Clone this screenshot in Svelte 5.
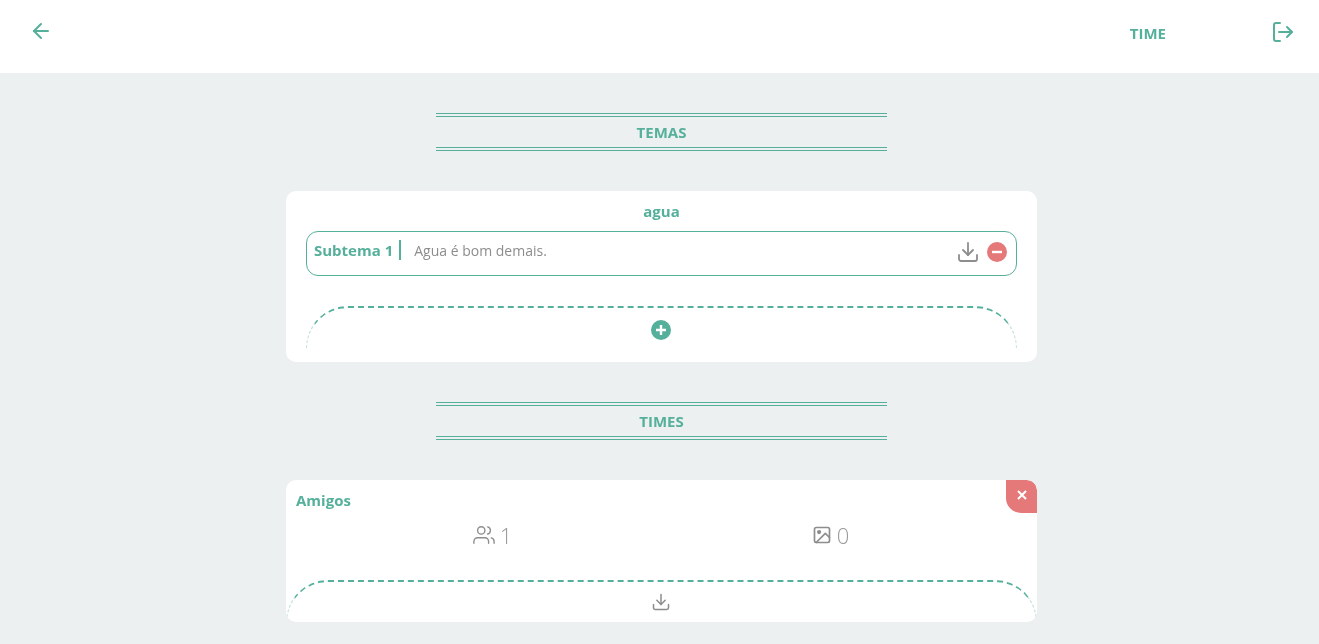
<script>
  const temas = [{ name: 'agua', subtemas: [{ title: 'Subtema 1', text: 'Agua é bom demais.' }] }];
  const times = [{ name: 'Amigos', members: 1, images: 0 }];
</script>

{#snippet download(size)}
  <svg width={size} height={size} viewBox="0 0 24 24" fill="none" stroke="#8d8d8d" stroke-width="1.8" stroke-linecap="round" stroke-linejoin="round">
    <path d="M21 15v4a2 2 0 0 1-2 2H5a2 2 0 0 1-2-2v-4" />
    <path d="M7 10l5 5 5-5" />
    <path d="M12 15V3" />
  </svg>
{/snippet}

<header class="topbar">
  <button class="icon-btn back" aria-label="Voltar">
    <svg width="24" height="24" viewBox="0 0 24 24" fill="none" stroke="#55b09b" stroke-width="2" stroke-linecap="round" stroke-linejoin="round">
      <path d="M19 12H5" />
      <path d="M12 19l-7-7 7-7" />
    </svg>
  </button>
  <span class="time-link">TIME</span>
  <button class="icon-btn logout" aria-label="Sair">
    <svg width="24" height="24" viewBox="0 0 24 24" fill="none" stroke="#55b09b" stroke-width="2" stroke-linecap="round" stroke-linejoin="round">
      <path d="M9 3H5a2 2 0 0 0-2 2v14a2 2 0 0 0 2 2h4" />
      <path d="M16 17l5-5-5-5" />
      <path d="M21 12H8" />
    </svg>
  </button>
</header>

<main class="content">
  <h2 class="section-title">TEMAS</h2>

  {#each temas as tema}
    <section class="card tema">
      <h3 class="tema-name">{tema.name}</h3>
      {#each tema.subtemas as sub}
        <div class="subtema">
          <strong class="sub-title">{sub.title}</strong>
          <span class="sub-text">{sub.text}</span>
          {@render download(24)}
          <span class="round red" aria-hidden="true">
            <svg width="20" height="20" viewBox="0 0 20 20"><path d="M5 10h10" stroke="#fff" stroke-width="2.4" /></svg>
          </span>
        </div>
      {/each}
      <div class="dashed add">
        <span class="round green" aria-hidden="true">
          <svg width="20" height="20" viewBox="0 0 20 20"><path d="M5 10h10M10 5v10" stroke="#fff" stroke-width="2.4" /></svg>
        </span>
      </div>
    </section>
  {/each}

  <h2 class="section-title second">TIMES</h2>

  {#each times as time}
    <section class="card team">
      <button class="close" aria-label="Excluir">
        <svg width="12" height="12" viewBox="0 0 12 12"><path d="M2 2l8 8M10 2l-8 8" stroke="#fff" stroke-width="2" /></svg>
      </button>
      <h3 class="team-name">{time.name}</h3>
      <div class="stats">
        <div class="stat">
          <svg width="22" height="22" viewBox="0 0 24 24" fill="none" stroke="#8d8d8d" stroke-width="1.5" stroke-linecap="round" stroke-linejoin="round">
            <path d="M17 21v-2a4 4 0 0 0-4-4H5a4 4 0 0 0-4 4v2" />
            <circle cx="9" cy="7" r="4" />
            <path d="M23 21v-2a4 4 0 0 0-3-3.87" />
            <path d="M16 3.13a4 4 0 0 1 0 7.75" />
          </svg>
          <span>{time.members}</span>
        </div>
        <div class="stat">
          <svg width="20" height="20" viewBox="0 0 24 24" fill="none" stroke="#8d8d8d" stroke-width="2" stroke-linecap="round" stroke-linejoin="round">
            <rect x="3" y="3" width="18" height="18" rx="2" />
            <circle cx="8.5" cy="8.5" r="1.5" fill="#8d8d8d" />
            <path d="M21 15l-5-5L5 21" />
          </svg>
          <span>{time.images}</span>
        </div>
      </div>
      <div class="dashed import">
        {@render download(20)}
      </div>
    </section>
  {/each}
</main>

<style>
  :global(body) {
    margin: 0;
    background: #ecf0f1;
    font-family: "Open Sans", "Noto Sans", sans-serif;
    overflow: hidden;
  }

  /* own layer, so text gets grayscale antialiasing */
  :global(#app) {
    will-change: transform;
  }

  .topbar {
    height: 73px;
    background: #fff;
    display: flex;
    align-items: flex-start;
    box-sizing: border-box;
    padding: 0 24px 0 29px;
  }

  .icon-btn {
    background: none;
    border: 0;
    padding: 0;
    display: flex;
  }

  .back {
    margin-top: 19px;
  }

  .time-link {
    margin-left: auto;
    margin-top: 23px;
    font-size: 15px;
    line-height: 20px;
    font-weight: 700;
    color: #55b09b;
  }

  .logout {
    margin-left: 105px;
    margin-top: 20px;
  }

  .content {
    display: flex;
    flex-direction: column;
    align-items: center;
    padding-top: 40px;
    padding-left: 4px;
  }

  .section-title {
    width: 451px;
    height: 38px;
    box-sizing: border-box;
    margin: 0 0 40px;
    border-top: 4px double #55b09b;
    border-bottom: 4px double #55b09b;
    text-align: center;
    font-size: 15px;
    line-height: 30px;
    font-weight: 700;
    color: #55b09b;
  }

  .section-title.second {
    margin-top: 40px;
  }

  .card {
    width: 751px;
    background: #fff;
    border-radius: 10px;
    box-sizing: border-box;
    position: relative;
  }

  .tema {
    height: 171px;
    padding: 10px 20px 0;
  }

  .tema-name {
    margin: 0 0 10px;
    text-align: center;
    font-size: 15px;
    line-height: 20px;
    font-weight: 700;
    color: #55b09b;
  }

  .subtema {
    height: 45px;
    box-sizing: border-box;
    border: 1px solid #55b09b;
    border-radius: 12px;
    display: flex;
    align-items: center;
    padding: 0 9px 4px 7px;
  }

  .sub-title {
    font-size: 15px;
    line-height: 20px;
    color: #55b09b;
    padding-right: 6px;
    border-right: 2px solid #55b09b;
    margin-bottom: 3px;
  }

  .sub-text {
    flex: 1;
    margin-left: 13px;
    margin-bottom: 2px;
    font-size: 14px;
    line-height: 20px;
    color: #8d8d8d;
  }

  .round {
    width: 20px;
    height: 20px;
    border-radius: 50%;
    display: block;
    flex: none;
  }

  .round svg {
    display: block;
  }

  .red {
    background: #e57878;
    margin-left: 7px;
  }

  .green {
    background: #55b09b;
  }

  .dashed {
    box-sizing: border-box;
    border-top: 2px dashed #55b09b;
    border-left: 1px dashed rgba(85, 176, 155, 0.35);
    border-right: 1px dashed rgba(85, 176, 155, 0.35);
    border-bottom: 0;
    border-radius: 50px 50px 0 0;
    display: flex;
    justify-content: center;
    padding-right: 2px;
  }

  .add {
    height: 42px;
    margin-top: 30px;
    padding-top: 12px;
  }

  .team {
    height: 142px;
    padding: 10px 0 0;
    overflow: hidden;
  }

  .close {
    position: absolute;
    top: 0;
    right: 0;
    width: 31px;
    height: 33px;
    border: 0;
    padding: 0 0 4px;
    background: #e57878;
    border-radius: 0 10px 0 15px;
    display: flex;
    align-items: center;
    justify-content: center;
  }

  .team-name {
    margin: 0 0 0 10px;
    font-size: 15px;
    line-height: 20px;
    font-weight: 700;
    color: #55b09b;
  }

  .stats {
    display: flex;
    width: 90%;
    height: 46px;
    margin: 8px auto 0;
  }

  .stat {
    flex: 1;
    display: flex;
    align-items: center;
    justify-content: center;
    gap: 5px;
    height: 33px;
    font-size: 22px;
    font-weight: 300;
    color: #9a9a9a;
  }

  .import {
    height: 42px;
    margin-top: 16px;
    padding-top: 10px;
  }

  .import svg {
    display: block;
  }
</style>
